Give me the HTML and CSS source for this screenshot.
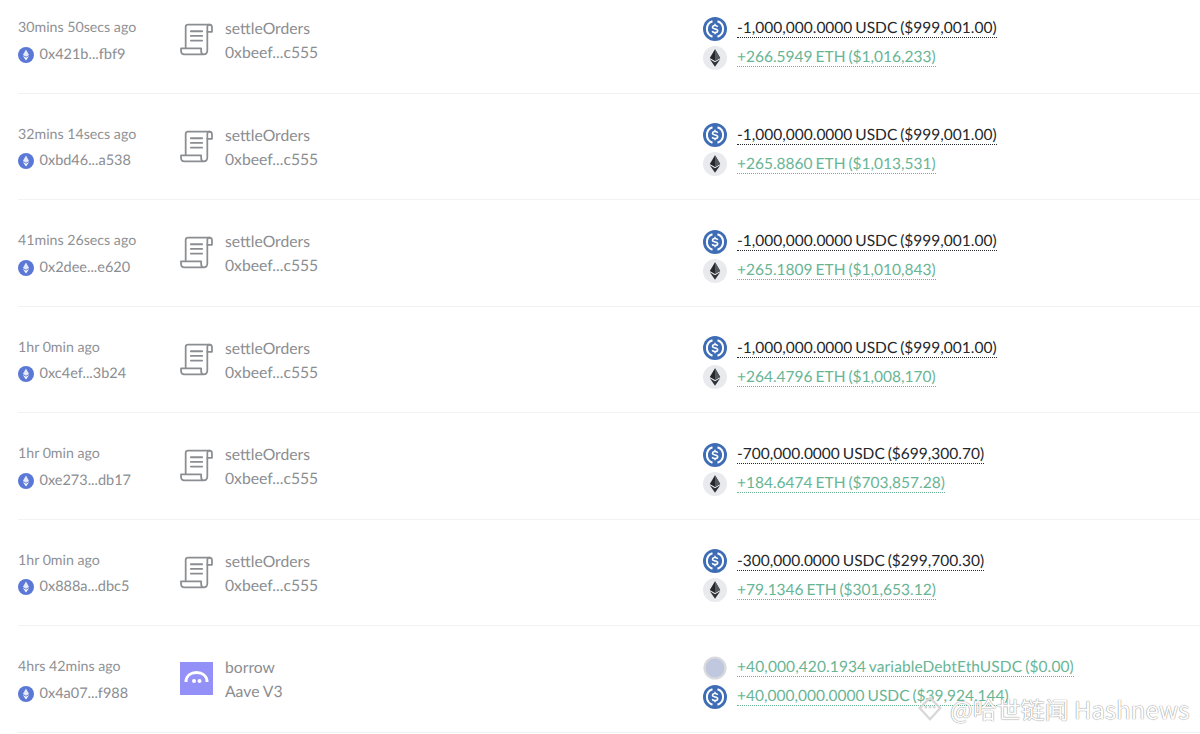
FILE: index.html
```html
<!DOCTYPE html>
<html lang="en">
<head>
<meta charset="utf-8">
<title>Transactions</title>
<link rel="stylesheet" href="styles.css">
</head>
<body>
<svg class="defs" width="0" height="0" aria-hidden="true">
  <symbol id="eth-chain" viewBox="0 0 16 16">
    <circle cx="8" cy="8" r="8" fill="#5b78d6"/>
    <path d="M8 2.600 4.900 8 8 9.800 11.100 8Z" fill="#e4e9fa"/>
    <path d="M8 10.700 4.900 8.900 8 13.400 11.100 8.900Z" fill="#fff"/>
  </symbol>
  <symbol id="scroll" viewBox="0 0 32 32">
    <g fill="none" stroke="#8a8d91" stroke-width="1.700" stroke-linejoin="round" stroke-linecap="round">
      <path d="M5.500 24V3.800C5.500 2.500 6.500 1.500 7.800 1.500H28.500"/>
      <path d="M28.500 1.500C30 1.500 31 2.600 31 4V8.500H26.500V26.500C26.500 29 25 30.500 23 30.500H4C2 30.500 1 29 1 27V24.500H20.500V27C20.500 29 21.500 30.500 23 30.500"/>
      <path d="M26.500 8.500V3.800C26.500 2.500 27.300 1.500 28.500 1.500"/>
      <path d="M10.500 8H21.500M10.500 12.500H21.500M10.500 17H21.500"/>
    </g>
  </symbol>
  <symbol id="usdc" viewBox="0 0 24 24">
    <circle cx="12" cy="12" r="12" fill="#3e6db5"/>
    <path d="M9.500 4.300A8.100 8.100 0 0 0 9.500 19.700M14.500 4.300A8.100 8.100 0 0 1 14.500 19.700" fill="none" stroke="#fff" stroke-width="2"/>
    <path d="M14.700 9.900C14.300 8.900 13.300 8.500 12 8.500C10.500 8.500 9.500 9.200 9.500 10.300C9.500 12.900 14.700 11.200 14.700 13.800C14.700 14.900 13.600 15.600 12 15.600C10.600 15.600 9.600 15.100 9.200 14.100M12 6.800V8.500M12 15.600V17.300" fill="none" stroke="#fff" stroke-width="1.500"/>
  </symbol>
  <symbol id="eth" viewBox="0 0 24 24">
    <circle cx="12" cy="12" r="12" fill="#e9eaee"/>
    <path d="M12 3.200 6.800 12 12 15 17.200 12Z" fill="#24272b"/>
    <path d="M12 3.200V15L17.200 12Z" fill="#55585c"/>
    <path d="M12 16.300 6.800 13.200 12 20.800 17.200 13.200Z" fill="#2f3236"/>
  </symbol>
  <symbol id="debt" viewBox="0 0 24 24">
    <circle cx="12" cy="12" r="10.500" fill="#c0c8e0" stroke="#d9dadd" stroke-width="2.200"/>
  </symbol>
  <symbol id="aave" viewBox="0 0 33 33">
    <rect width="33" height="33" fill="#9391f7"/>
    <path d="M6 20C6 13.500 11 10.500 16.500 10.500S27 13.500 27 20" fill="none" stroke="#fff" stroke-width="3"/>
    <circle cx="14" cy="19" r="2" fill="#fff"/>
    <circle cx="19.500" cy="19" r="2" fill="#fff"/>
  </symbol>
</svg>

<main class="list">
  <section class="row">
    <div class="when"><div class="age">30mins 50secs ago</div><div class="hash"><svg class="chain"><use href="#eth-chain"/></svg>0x421b...fbf9</div></div>
    <div class="action"><svg class="logo"><use href="#scroll"/></svg><div class="names"><div>settleOrders</div><div>0xbeef...c555</div></div></div>
    <div class="tokens">
      <div class="token"><svg class="coin"><use href="#usdc"/></svg><span class="amt out">-1,000,000.0000 USDC ($999,001.00)</span></div>
      <div class="token"><svg class="coin"><use href="#eth"/></svg><span class="amt in">+266.5949 ETH ($1,016,233)</span></div>
    </div>
  </section>
  <section class="row">
    <div class="when"><div class="age">32mins 14secs ago</div><div class="hash"><svg class="chain"><use href="#eth-chain"/></svg>0xbd46...a538</div></div>
    <div class="action"><svg class="logo"><use href="#scroll"/></svg><div class="names"><div>settleOrders</div><div>0xbeef...c555</div></div></div>
    <div class="tokens">
      <div class="token"><svg class="coin"><use href="#usdc"/></svg><span class="amt out">-1,000,000.0000 USDC ($999,001.00)</span></div>
      <div class="token"><svg class="coin"><use href="#eth"/></svg><span class="amt in">+265.8860 ETH ($1,013,531)</span></div>
    </div>
  </section>
  <section class="row">
    <div class="when"><div class="age">41mins 26secs ago</div><div class="hash"><svg class="chain"><use href="#eth-chain"/></svg>0x2dee...e620</div></div>
    <div class="action"><svg class="logo"><use href="#scroll"/></svg><div class="names"><div>settleOrders</div><div>0xbeef...c555</div></div></div>
    <div class="tokens">
      <div class="token"><svg class="coin"><use href="#usdc"/></svg><span class="amt out">-1,000,000.0000 USDC ($999,001.00)</span></div>
      <div class="token"><svg class="coin"><use href="#eth"/></svg><span class="amt in">+265.1809 ETH ($1,010,843)</span></div>
    </div>
  </section>
  <section class="row">
    <div class="when"><div class="age">1hr 0min ago</div><div class="hash"><svg class="chain"><use href="#eth-chain"/></svg>0xc4ef...3b24</div></div>
    <div class="action"><svg class="logo"><use href="#scroll"/></svg><div class="names"><div>settleOrders</div><div>0xbeef...c555</div></div></div>
    <div class="tokens">
      <div class="token"><svg class="coin"><use href="#usdc"/></svg><span class="amt out">-1,000,000.0000 USDC ($999,001.00)</span></div>
      <div class="token"><svg class="coin"><use href="#eth"/></svg><span class="amt in">+264.4796 ETH ($1,008,170)</span></div>
    </div>
  </section>
  <section class="row">
    <div class="when"><div class="age">1hr 0min ago</div><div class="hash"><svg class="chain"><use href="#eth-chain"/></svg>0xe273...db17</div></div>
    <div class="action"><svg class="logo"><use href="#scroll"/></svg><div class="names"><div>settleOrders</div><div>0xbeef...c555</div></div></div>
    <div class="tokens">
      <div class="token"><svg class="coin"><use href="#usdc"/></svg><span class="amt out">-700,000.0000 USDC ($699,300.70)</span></div>
      <div class="token"><svg class="coin"><use href="#eth"/></svg><span class="amt in">+184.6474 ETH ($703,857.28)</span></div>
    </div>
  </section>
  <section class="row">
    <div class="when"><div class="age">1hr 0min ago</div><div class="hash"><svg class="chain"><use href="#eth-chain"/></svg>0x888a...dbc5</div></div>
    <div class="action"><svg class="logo"><use href="#scroll"/></svg><div class="names"><div>settleOrders</div><div>0xbeef...c555</div></div></div>
    <div class="tokens">
      <div class="token"><svg class="coin"><use href="#usdc"/></svg><span class="amt out">-300,000.0000 USDC ($299,700.30)</span></div>
      <div class="token"><svg class="coin"><use href="#eth"/></svg><span class="amt in">+79.1346 ETH ($301,653.12)</span></div>
    </div>
  </section>
  <section class="row">
    <div class="when"><div class="age">4hrs 42mins ago</div><div class="hash"><svg class="chain"><use href="#eth-chain"/></svg>0x4a07...f988</div></div>
    <div class="action"><svg class="logo"><use href="#aave"/></svg><div class="names"><div>borrow</div><div>Aave V3</div></div></div>
    <div class="tokens">
      <div class="token"><svg class="coin"><use href="#debt"/></svg><span class="amt in long">+40,000,420.1934 variableDebtEthUSDC ($0.00)</span></div>
      <div class="token"><svg class="coin"><use href="#usdc"/></svg><span class="amt in">+40,000,000.0000 USDC ($39,924,144)</span></div>
    </div>
  </section>
</main>

<div class="watermark">
  <svg class="wm-mark" viewBox="0 0 28 28" aria-hidden="true">
    <path d="M14 2 25 13 14 25 3 13Z" fill="none" stroke="#d8d8d8" stroke-width="2.500"/>
    <circle cx="9.500" cy="12" r="1.500" fill="#d8d8d8"/><circle cx="14" cy="12" r="1.500" fill="#d8d8d8"/><circle cx="18.500" cy="12" r="1.500" fill="#d8d8d8"/>
  </svg>
  <span>@哈世链闻 Hashnews</span>
</div>
</body>
</html>
```
FILE: styles.css
```css
html, body {
  margin: 0;
  padding: 0;
  height: 734px;
  overflow: hidden;
  background: #fff;
}
body {
  position: relative;
  font-family: Lato, "Noto Sans", sans-serif;
  font-size: 15px;
  color: #8b8d91;
  text-rendering: geometricPrecision;
}
.defs { position: absolute; }
.list {
  margin: -13px 0 0 18px;
}
.row {
  box-sizing: border-box;
  height: 106.5px;
  border-bottom: 1px solid #f1f2f4;
  display: flex;
  align-items: center;
}
.when {
  width: 162px;
  display: flex;
  flex-direction: column;
  gap: 8.500px;
  margin-top: 3px;
}
.age {
  font-size: 14.200px;
  line-height: 18px;
  color: #8f9195;
  white-space: nowrap;
}
.hash {
  display: flex;
  align-items: center;
  gap: 5.500px;
  font-size: 14.500px;
  line-height: 18px;
  white-space: nowrap;
}
.chain { width: 16px; height: 16px; }
.action {
  width: 523px;
  display: flex;
  align-items: center;
  gap: 12px;
}
.logo { width: 33px; height: 33px; }
.names {
  display: flex;
  flex-direction: column;
  gap: 5px;
  margin-top: 4px;
  font-size: 15.700px;
  line-height: 19px;
  white-space: nowrap;
}
.tokens {
  display: flex;
  flex-direction: column;
  gap: 5px;
  margin-top: 7px;
}
.token {
  display: flex;
  align-items: center;
  gap: 10px;
  height: 24px;
}
.coin { width: 24px; height: 24px; }
.amt {
  font-size: 15.500px;
  word-spacing: -1px;
  line-height: 18px;
  white-space: nowrap;
  border-bottom: 1px dotted currentColor;
}
.out { color: #24272b; }
.in { color: #68b595; }
.long { letter-spacing: 0.1px; }
.watermark {
  position: absolute;
  left: 917px;
  top: 694px;
  display: flex;
  align-items: center;
  gap: 7px;
  color: #fff;
  font-family: "Noto Sans CJK SC", "Liberation Sans", sans-serif;
  font-size: 24px;
  line-height: 30px;
  white-space: nowrap;
  text-shadow: 0 0 1px #8d8d8d, 0 0 1px #8d8d8d;
}
.wm-mark { width: 26px; height: 30px; }
```
